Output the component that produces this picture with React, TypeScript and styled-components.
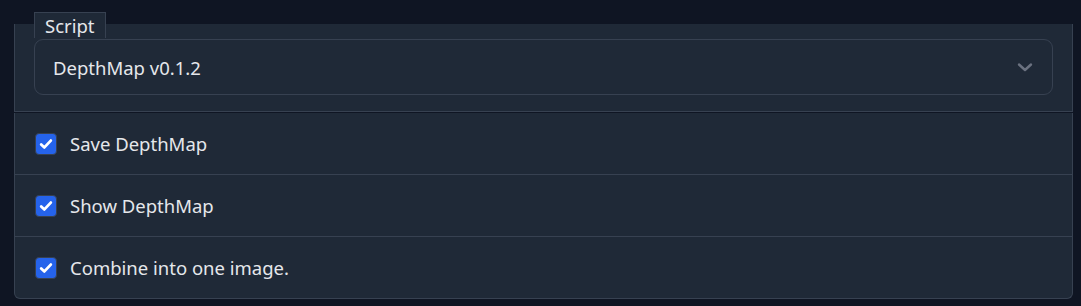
import styled, { createGlobalStyle } from "styled-components";

const GlobalStyle = createGlobalStyle`
  body {
    margin: 0;
    background: #0f1523;
    font-family: "Noto Sans", "Open Sans", sans-serif;
    color: #e5e7eb;
  }
`;

const Page = styled.div`
  padding: 24px 8px 8px 14px;
`;

const Panel = styled.div`
  position: relative;
  background: #1f2937;
  border: 1px solid #374151;
  border-top: none;
  padding: 15px 19px 16px 19px;
`;

const Label = styled.span`
  position: absolute;
  top: -12px;
  left: 19px;
  height: 25px;
  padding: 0 10px;
  display: flex;
  align-items: center;
  background: #1f2937;
  border: 1px solid #374151;
  border-bottom: none;
  font-size: 18.5px;
  color: #e5e7eb;
`;

const Select = styled.div`
  height: 54px;
  border: 1px solid #374151;
  border-radius: 9px;
  display: flex;
  align-items: center;
  justify-content: space-between;
  padding: 0 18px;
  font-size: 18.5px;
`;

const Group = styled.div`
  background: #1f2937;
  border: 1px solid #374151;
  border-top: none;
  border-radius: 0 0 6px 6px;
  margin-top: 1px;
`;

const Row = styled.label`
  height: 61px;
  display: flex;
  align-items: center;
  gap: 13px;
  padding-left: 20px;
  font-size: 18.5px;
  border-bottom: 1px solid #374151;
  &:last-child {
    border-bottom: none;
  }
`;

const Box = styled.span`
  width: 20px;
  height: 20px;
  border: 1px solid #374151;
  border-radius: 4px;
  background: #2563eb;
  display: flex;
  align-items: center;
  justify-content: center;
`;

const Check = () => (
  <svg width="14" height="14" viewBox="0 0 14 14">
    <path d="M2.2 7.4 L5.4 10.4 L11.8 3.6" fill="none" stroke="#fff" strokeWidth="2.8" strokeLinecap="round" strokeLinejoin="round" />
  </svg>
);

const Chevron = () => (
  <svg width="18" height="18" viewBox="0 0 18 18">
    <path d="M3 6.5 L9 12 L15 6.5" fill="none" stroke="#6b7280" strokeWidth="2.4" strokeLinecap="round" strokeLinejoin="round" />
  </svg>
);

const options = ["Save DepthMap", "Show DepthMap", "Combine into one image."];

export default function App() {
  return (
    <>
      <GlobalStyle />
      <Page>
        <Panel>
          <Label>Script</Label>
          <Select>
            <span>DepthMap v0.1.2</span>
            <Chevron />
          </Select>
        </Panel>
        <Group>
          {options.map((o) => (
            <Row key={o}>
              <Box>
                <Check />
              </Box>
              <span>{o}</span>
            </Row>
          ))}
        </Group>
      </Page>
    </>
  );
}
